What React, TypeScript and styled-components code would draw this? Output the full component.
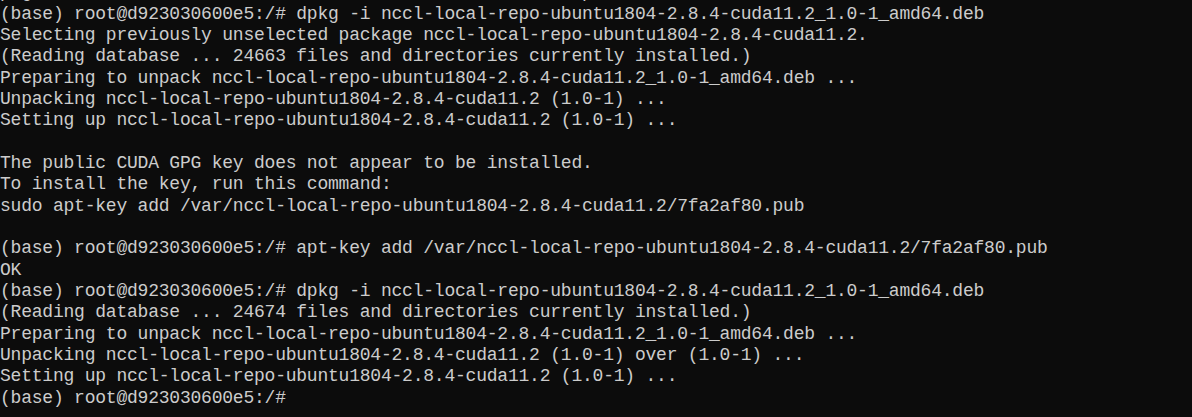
import React from "react";
import styled, { createGlobalStyle } from "styled-components";

const GlobalStyle = createGlobalStyle`
  html, body {
    margin: 0;
    padding: 0;
    background: #0c0c0c;
  }
  #root {
    width: 1192px;
    height: 417px;
  }
`;

const Console = styled.main`
  box-sizing: border-box;
  width: 1192px;
  height: 417px;
  overflow: hidden;
  background: #0c0c0c;
  display: flex;
  flex-direction: column;
  justify-content: flex-end;
  padding: 0 0 8px 0;
  color: #cccccc;
  font-family: "Liberation Mono", "DejaVu Sans Mono", monospace;
  font-size: 18px;
  letter-spacing: -0.22px;
`;

const Line = styled.div`
  flex: none;
  height: 21.333px;
  line-height: 21.333px;
  white-space: pre;
`;

const lines: string[] = [
  "p g                                                    p                    _ _",
  "(base) root@d923030600e5:/# dpkg -i nccl-local-repo-ubuntu1804-2.8.4-cuda11.2_1.0-1_amd64.deb",
  "Selecting previously unselected package nccl-local-repo-ubuntu1804-2.8.4-cuda11.2.",
  "(Reading database ... 24663 files and directories currently installed.)",
  "Preparing to unpack nccl-local-repo-ubuntu1804-2.8.4-cuda11.2_1.0-1_amd64.deb ...",
  "Unpacking nccl-local-repo-ubuntu1804-2.8.4-cuda11.2 (1.0-1) ...",
  "Setting up nccl-local-repo-ubuntu1804-2.8.4-cuda11.2 (1.0-1) ...",
  "",
  "The public CUDA GPG key does not appear to be installed.",
  "To install the key, run this command:",
  "sudo apt-key add /var/nccl-local-repo-ubuntu1804-2.8.4-cuda11.2/7fa2af80.pub",
  "",
  "(base) root@d923030600e5:/# apt-key add /var/nccl-local-repo-ubuntu1804-2.8.4-cuda11.2/7fa2af80.pub",
  "OK",
  "(base) root@d923030600e5:/# dpkg -i nccl-local-repo-ubuntu1804-2.8.4-cuda11.2_1.0-1_amd64.deb",
  "(Reading database ... 24674 files and directories currently installed.)",
  "Preparing to unpack nccl-local-repo-ubuntu1804-2.8.4-cuda11.2_1.0-1_amd64.deb ...",
  "Unpacking nccl-local-repo-ubuntu1804-2.8.4-cuda11.2 (1.0-1) over (1.0-1) ...",
  "Setting up nccl-local-repo-ubuntu1804-2.8.4-cuda11.2 (1.0-1) ...",
  "(base) root@d923030600e5:/#",
];

export default function App() {
  return (
    <>
      <GlobalStyle />
      <Console>
        {lines.map((text, i) => (
          <Line key={i}>{text}</Line>
        ))}
      </Console>
    </>
  );
}
